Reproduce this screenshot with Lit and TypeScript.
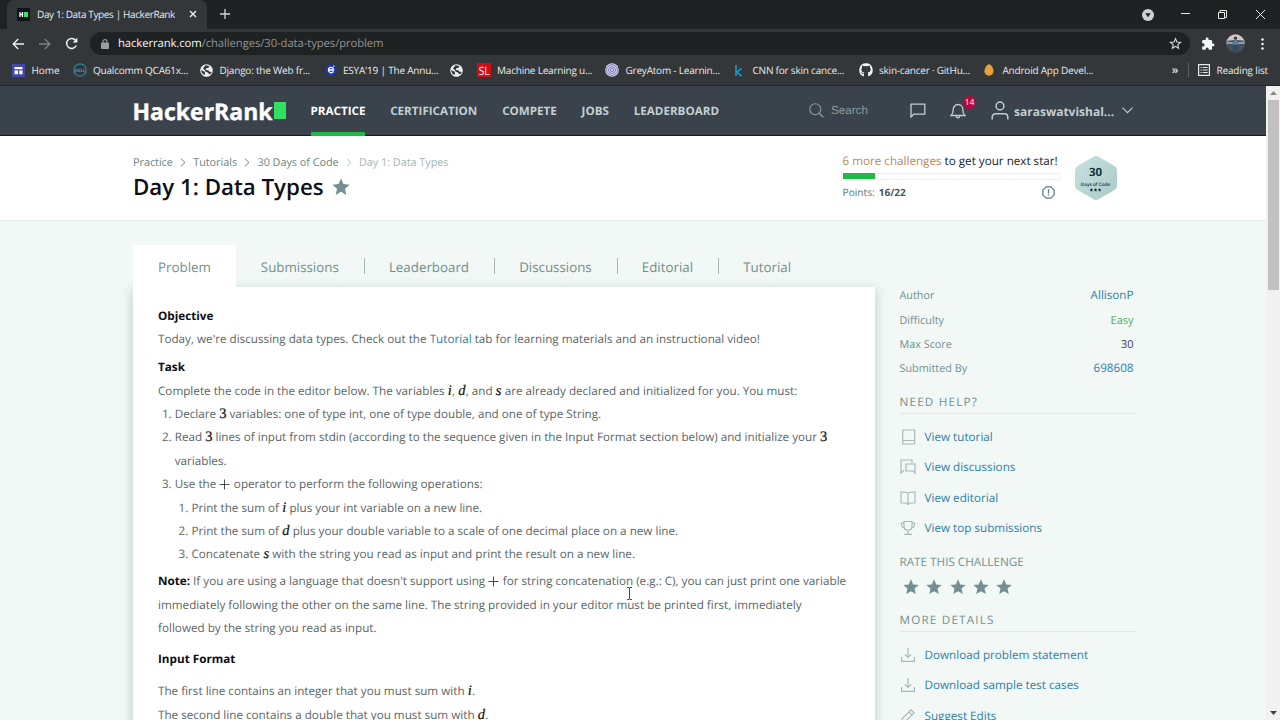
import { LitElement, html, css, svg } from "lit";
import { customElement } from "lit/decorators.js";

const STAR = "M12 .5l3.300 7.600 8.200.8-6.200 5.400 1.800 8.200L12 18.200l-7.100 4.300 1.800-8.200L.5 8.900l8.200-.8z";

const ico = (w: number, h: number, vb: string, body: unknown, cls = "") =>
  html`<svg class="ico ${cls}" width=${w} height=${h} viewBox=${vb}>${body}</svg>`;

const globe = ico(13, 13, "0 0 13 13", svg`<circle cx="6.500" cy="6.500" r="6.300" fill="#eceded"/>
  <path d="M1.200 6.200l2.600 1 1.200 1.300-.3 2.600C2.500 10.300 1.200 8.500 1.200 6.200zM5.500 1.300l3.800.7-.8 1.800-2.200.5-.6 1.600 2.600.3 1.200 1.500 2.200.2-1.200 2-1.500.3-1-1.800-2.300-.6-1-1.800L3 4.400z" fill="#34383b"/>`);

const bookmarks = [
  { w: 60.500, cls: "b1", label: "Home", icon: ico(13, 13, "0 0 13 13", svg`<rect width="13" height="13" fill="#4348a8"/><path d="M2.500 3h8v2.300h-8zM2.500 6.500h3.600v3.700H2.500zM7.300 6.500h3.200v3.700H7.300z" fill="#fff"/>`) },
  { w: 127.500, cls: "b2", label: "Qualcomm QCA61x...", icon: ico(14, 14, "0 0 14 14", svg`<circle cx="7" cy="7" r="6.200" fill="none" stroke="#3485a4" stroke-width="1.200"/><text x="7" y="8.800" font-size="4.600" font-weight="700" text-anchor="middle" fill="#3d9abf" font-family="Open Sans, sans-serif">DELL</text>`) },
  { w: 124.500, cls: "b3", label: "Django: the Web fr...", icon: globe },
  { w: 125.500, cls: "b4", label: "ESYA'19 | The Annu...", icon: ico(12, 12, "0 0 12 12", svg`<circle cx="6" cy="6" r="5.800" fill="#1b36b8"/><path d="M3.800 6h4.700c0-3.600-5-3.300-5 .2 0 3 3.600 3.300 5 1.200M8.500 2.500l.8-.8" fill="none" stroke="#fff" stroke-width="1.300"/>`) },
  { w: 26.500, cls: "b5", label: "", icon: globe },
  { w: 128.500, cls: "b6", label: "Machine Learning u...", icon: ico(14, 14, "0 0 14 14", svg`<rect width="14" height="14" fill="#d30d14"/><text x="7" y="11.500" font-size="11.500" textLength="10.500" lengthAdjust="spacingAndGlyphs" text-anchor="middle" fill="#fff" font-family="Open Sans, sans-serif">SL</text>`) },
  { w: 128, cls: "b7", label: "GreyAtom - Learnin...", icon: ico(14, 14, "0 0 14 14", svg`<circle cx="7" cy="7" r="6.800" fill="#d9d9f0"/><g fill="none" stroke="#5450a8" stroke-width=".7"><circle cx="7" cy="7" r="5.400"/><circle cx="7" cy="7" r="3.500"/><circle cx="7" cy="7" r="1.600"/></g>`) },
  { w: 125.500, cls: "b8", label: "CNN for skin cance...", icon: ico(13, 13, "0 0 13 13", svg`<path d="M3 1v11M8.500 4.500L3.700 8.300 8.800 12" fill="none" stroke="#1f93bd" stroke-width="1.700"/>`) },
  { w: 125.500, cls: "b9", label: "skin-cancer · GitHu...", icon: ico(14, 14, "0 0 16 16", svg`<path fill="#f4f4f4" d="M8 .3a7.700 7.700 0 00-2.400 15v-2.700c-1.700.3-2.300-.5-2.600-1.200-.2-.5-.6-.9-1-1.100.9-.2 1.400.4 1.900 1 .5.800 1.100.8 1.800.6.1-.5.300-.8.500-1-1.900-.2-3.500-1-3.500-3.800 0-.9.3-1.600.8-2.100-.1-.5-.2-1.200.1-2.100.8 0 1.600.4 2.300.9a8 8 0 014.200 0c.7-.5 1.500-.9 2.300-.9.3.9.2 1.600.1 2.100.5.500.8 1.200.8 2.100 0 2.800-1.700 3.600-3.500 3.800.3.300.6.800.6 1.500v2.900A7.700 7.700 0 008 .3z"/>`) },
  { w: 120, cls: "b10", label: "Android App Devel...", icon: ico(12, 12, "0 0 12 12", svg`<path d="M5 .3c2.300 0 4.500 4.200 4.500 7 0 2.700-1.900 4.400-4.500 4.400S.5 10 .5 7.300C.5 4.500 2.700.3 5 .3z" fill="#e9a13b"/>`) },
];

@customElement("browser-chrome")
class BrowserChrome extends LitElement {
  static styles = css`
    :host { display: block; height: 86px; font-family: "Open Sans", sans-serif; font-size: 10px; color: #e9eaeb; background: #33373a; text-rendering: geometricPrecision; }
    .ico { display: block; flex: none; }
    .strip { display: flex; height: 28.500px; background: #1f2223; align-items: center; box-sizing: border-box; }
    .tab { display: flex; align-items: center; width: 200px; height: 28.500px; margin-left: 7px; padding: 0 10px; box-sizing: border-box; background: #33373a; border-radius: 7px 7px 0 0; }
    .title { margin-left: 7px; flex: 1; white-space: nowrap; letter-spacing: -0.380px; }
    .plus { margin-left: 13px; }
    .win { margin-left: auto; display: flex; align-items: center; padding-right: 15px; }
    .win .w1 { margin: 1px 26.500px 0 0; }
    .win .w2 { margin-right: 28px; }
    .win .w3 { margin-right: 29.500px; }
    .bar { display: flex; align-items: center; height: 30.500px; padding: 0 16.500px 0 12px; }
    .bar .fwd { margin-left: 15px; }
    .bar .rel { margin: 0 12px 0 14px; }
    .omni { flex: 1; display: flex; align-items: center; height: 23px; border-radius: 12px; background: #1f2223; padding: 0 8.500px 0 11px; font-size: 11.300px; letter-spacing: -0.090px; }
    .url { flex: 1; margin-left: 9px; color: #8f9294; }
    .host { color: #f5f5f5; }
    .puz { margin: 0 10.500px 0 11px; }
    .dots { margin-left: 16px; }
    .marks { display: flex; align-items: center; height: 22px; padding: 0 12px; }
    .mark { display: flex; align-items: center; flex: none; white-space: nowrap; gap: 6.500px; box-sizing: border-box; letter-spacing: -0.210px; }
    .b1 { letter-spacing: -0.050px; }
    .rest { margin-left: auto; display: flex; align-items: center; white-space: nowrap; }
    .more { font-size: 12px; margin-right: 9px; font-weight: 600; padding-bottom: 2px; }
    .sep { width: 1px; height: 14px; background: #5c6063; margin-right: 9px; }
    .rest .txt { margin-left: 7px; letter-spacing: -0.170px; }
    .edge { margin-top: 4px; height: 1px; background: #24272a; }
  `;
  render() {
    return html`
      <div class="strip">
        <div class="tab">
          ${ico(13, 13, "0 0 13 13", svg`<rect width="13" height="13" fill="#0d141a"/><path d="M3 4v5M5.500 4v5M3 6.500h2.500" stroke="#fff" stroke-width="1.300"/><rect x="7" y="4" width="4" height="5" fill="#2ee66b"/>`)}
          <span class="title">Day 1: Data Types | HackerRank</span>
          ${ico(8, 8, "0 0 8 8", svg`<path d="M1 1l6 6M7 1L1 7" stroke="#f0f0f0" stroke-width="1.400"/>`)}
        </div>
        ${ico(10, 10, "0 0 10 10", svg`<path d="M5 0v10M0 5h10" stroke="#d5d6d7" stroke-width="1.300"/>`, "plus")}
        <div class="win">
          ${ico(12, 12, "0 0 12 12", svg`<circle cx="6" cy="6" r="6" fill="#d0d1d2"/><path d="M3.200 4.300h5.600L6 8.200z" fill="#1f2223"/>`, "w1")}
          ${ico(9, 9, "0 0 9 9", svg`<path d="M0 3.500h9" stroke="#e8e8e8" stroke-width="1"/>`, "w2")}
          ${ico(9, 9, "0 0 9 9", svg`<path d="M.5 2.500h6v6h-6zM2 2.500V.500h6.500v7H7" fill="none" stroke="#e8e8e8" stroke-width="1"/>`, "w3")}
          ${ico(9, 9, "0 0 9 9", svg`<path d="M0 0l9 9M9 0L0 9" stroke="#e8e8e8" stroke-width="1"/>`)}
        </div>
      </div>
      <div class="bar">
        ${ico(12, 12, "0 0 12 12", svg`<path d="M12 6H1.500M6.200 1L1.200 6l5 5" fill="none" stroke="#f0f0f0" stroke-width="1.400"/>`)}
        ${ico(12, 12, "0 0 12 12", svg`<path d="M0 6h10.500M5.800 1l5 5-5 5" fill="none" stroke="#7d8183" stroke-width="1.300"/>`, "fwd")}
        ${ico(13, 13, "0 0 13 13", svg`<path d="M11.200 8.500A5 5 0 1 1 10.600 3.300L12 4.800" fill="none" stroke="#f0f0f0" stroke-width="1.500"/><path d="M12.300.8v4.600H7.700z" fill="#f0f0f0"/>`, "rel")}
        <div class="omni">
          ${ico(8, 10, "0 0 8 10", svg`<rect y="3.500" width="8" height="6.500" rx=".8" fill="#9a9d9f"/><path d="M2 4V2.600a2 2 0 014 0V4" fill="none" stroke="#9a9d9f" stroke-width="1.100"/>`)}
          <span class="url"><span class="host">hackerrank.com</span>/challenges/30-data-types/problem</span>
          ${ico(13, 13, "0 0 24 24", svg`<path d="M12 3l2.600 6.200 6.700.6-5.100 4.400 1.500 6.600-5.700-3.500-5.700 3.500 1.500-6.600-5.100-4.400 6.700-.6z" fill="none" stroke="#dcdddd" stroke-width="2"/>`)}
        </div>
        ${ico(14, 14, "0 0 24 24", svg`<path d="M20.500 11H19V7c0-1.100-.9-2-2-2h-4V3.500a2.500 2.500 0 00-5 0V5H4a2 2 0 00-2 2v3.800h1.500a2.700 2.700 0 010 5.400H2V20c0 1.100.9 2 2 2h3.800v-1.500a2.700 2.700 0 015.400 0V22H17c1.100 0 2-.9 2-2v-4h1.500a2.500 2.500 0 000-5z" fill="#f5f5f5"/>`, "puz")}
        ${ico(19, 19, "0 0 19 19", svg`<defs><clipPath id="av"><circle cx="9.500" cy="9.500" r="9.300"/></clipPath></defs><g clip-path="url(#av)"><rect width="19" height="8" fill="#d3c5c2"/><rect y="7" width="19" height="4" fill="#8d9eb0"/><rect y="10" width="19" height="9" fill="#48505c"/><path d="M1.500 6.700l6-.4h4l6 .2v1l-5.300.5-.7 3.500 1 6.500H10.300L9.500 13l-.8 5H6.500l1-6.500-.7-3.500-5.300-.3z" fill="#30475f"/><circle cx="9.500" cy="4.200" r="1.600" fill="#3c3436"/><path d="M7.500 6.700h4v4h-4z" fill="#5687ad"/></g>`)}
        ${ico(3, 12, "0 0 3 12", svg`<g fill="#eee"><circle cx="1.500" cy="1.500" r="1.300"/><circle cx="1.500" cy="6" r="1.300"/><circle cx="1.500" cy="10.500" r="1.300"/></g>`, "dots")}
      </div>
      <div class="marks">
        ${bookmarks.map((b) => html`<div class="mark ${b.cls}" style="width:${b.w}px">${b.icon}${b.label}</div>`)}
        <div class="rest">
          <span class="more">»</span><span class="sep"></span>
          ${ico(12, 12, "0 0 12 12", svg`<rect x=".6" y=".6" width="10.800" height="10.800" fill="none" stroke="#e9eaeb" stroke-width="1.200"/><path d="M2.500 3.500h1.200M2.500 6h1.200M2.500 8.500h1.200M4.700 3.500h5M4.700 6h5M4.700 8.500h5" stroke="#e9eaeb"/>`)}
          <span class="txt">Reading list</span>
        </div>
      </div>
      <div class="edge"></div>`;
  }
}

@customElement("site-header")
class SiteHeader extends LitElement {
  static styles = css`
    :host { display: block; font-family: "Open Sans", sans-serif; text-rendering: geometricPrecision; }
    .ico { display: block; flex: none; }
    .nav { display: flex; height: 49px; border-bottom: 1px solid #161d25; background: #3a424c; align-items: center; padding-left: 133px; white-space: nowrap; }
    .logo { display: flex; align-items: center; width: 178px; color: #fff; font-weight: 700; font-size: 23px; margin-left: -0.500px; -webkit-text-stroke: 0.400px #fff; }
    .block { width: 12px; height: 17px; background: #32e05f; margin-left: 1px; }
    .links { display: flex; align-self: stretch; gap: 24.800px; font-size: 11.640px; font-weight: 700; color: #c2cfd1; }
    .link { display: flex; align-items: center; border-bottom: 4px solid transparent; padding-top: 5px; height: 41px; }
    .on { color: #fff; border-color: #1fba45; }
    .search { display: flex; align-items: center; margin-left: 90px; color: #8a9ba1; gap: 7px; font: 11.670px "Liberation Sans", sans-serif; width: 101px; }
    .bellbox { position: relative; margin-left: 24px; }
    .badge { position: absolute; left: 13px; top: -7px; width: 13px; height: 13px; border-radius: 7px; background: #b5083b; color: #fff; font-size: 8.500px; line-height: 13px; text-align: center; }
    .user { display: flex; align-items: center; margin-left: 25px; gap: 5px; font-size: 12px; font-weight: 700; color: #c2cfd1; }
    .user span { padding-top: 1px; }
    .caret { margin-left: 3px; }
    .head { display: flex; height: 84px; border-bottom: 1px solid #e3ebea; background: #fff; padding-left: 133px; box-sizing: content-box; }
    .left { width: 709.500px; padding-top: 17px; }
    .crumbs { display: flex; align-items: center; height: 18px; font-size: 10.830px; color: #6b8583; white-space: nowrap; letter-spacing: -0.020px; }
    .crumbs .ico { margin: 0 7.200px; }
    .last { color: #a3b5b4; }
    .title { display: flex; align-items: center; margin-top: 0.500px; height: 30px; font-size: 22.300px; font-weight: 600; color: #0b1016; white-space: nowrap; gap: 8px; }
    .prog { width: 217.500px; padding-top: 16px; white-space: nowrap; }
    .msg { font-size: 11.670px; line-height: 20px; color: #0e2230; }
    .hot { color: #b98659; }
    .track { height: 5px; border: 1px solid #eef1f1; border-left: 0; margin-top: 1px; }
    .fill { height: 6px; width: 32px; background: #1fba45; margin-top: -1px; }
    .pts { display: flex; align-items: center; height: 18px; margin-top: 3px; font-size: 10.200px; color: #5f7375; }
    .pts b { font-weight: 700; color: #4a535c; margin-left: 4px; flex: 1; font-size: 10px; }
    .pts .ico { margin-right: 5px; }
    .hex { margin: 18.500px 0 0 14px; }
  `;
  render() {
    const chev = (c: string) => ico(6, 9, "0 0 6 9", svg`<path d="M.8.6L5 4.500.8 8.400" fill="none" stroke=${c}/>`);
    return html`
      <div class="nav">
        <div class="logo"><span>HackerRank</span><span class="block"></span></div>
        <div class="links">
          <div class="link on">PRACTICE</div><div class="link">CERTIFICATION</div><div class="link">COMPETE</div><div class="link">JOBS</div><div class="link">LEADERBOARD</div>
        </div>
        <div class="search">${ico(15, 15, "0 0 15 15", svg`<circle cx="6.300" cy="6.300" r="5.500" fill="none" stroke="#8a9ba1" stroke-width="1.100"/><path d="M10.300 10.300l4 4" stroke="#8a9ba1" stroke-width="1.300"/>`)}<span>Search</span></div>
        ${ico(16, 15, "0 0 16 15", svg`<path d="M1 14V1.200h13.800v10H3.800z" fill="none" stroke="#c2cfd1" stroke-width="1.300"/>`)}
        <div class="bellbox">
          ${ico(16, 16, "0 0 16 16", svg`<path d="M1 12.500c1.800-1.500 2.200-3 2.200-6C3.200 3.700 5.200 1.500 8 1.500s4.800 2.200 4.800 5c0 3 .4 4.500 2.200 6zM6.300 13c0 2.500 3.400 2.500 3.400 0" fill="none" stroke="#c2cfd1" stroke-width="1.300"/>`)}
          <span class="badge">14</span>
        </div>
        <div class="user">
          ${ico(18, 19, "0 0 18 19", svg`<circle cx="9" cy="5" r="3.900" fill="none" stroke="#c2cfd1" stroke-width="1.500"/><path d="M1.200 18.500v-2.200c0-2.200 1.300-3.600 3.500-3.600h8.600c2.200 0 3.500 1.400 3.500 3.600v2.200" fill="none" stroke="#c2cfd1" stroke-width="1.500"/>`)}
          <span>saraswatvishal...</span>
          ${ico(11, 7, "0 0 11 7", svg`<path d="M.5.700l5 5 5-5" fill="none" stroke="#c2cfd1" stroke-width="1.100"/>`, "caret")}
        </div>
      </div>
      <div class="head">
        <div class="left">
          <div class="crumbs">Practice${chev("#6b8583")}Tutorials${chev("#6b8583")}30 Days of Code${chev("#b7c4c3")}<span class="last">Day 1: Data Types</span></div>
          <div class="title">Day 1: Data Types ${ico(18, 18, "0 0 24 24", svg`<path d=${STAR} fill="#738f93"/>`)}</div>
        </div>
        <div class="prog">
          <div class="msg"><span class="hot">6 more challenges</span> to get your next star!</div>
          <div class="track"><div class="fill"></div></div>
          <div class="pts">Points: <b>16/22</b>${ico(13, 13, "0 0 13 13", svg`<path d="M4.200.8h4.600l3.400 3.400v4.600l-3.400 3.400H4.200L.8 8.800V4.200z" fill="none" stroke="#587b7b" stroke-width="1.200"/><path d="M6.500 3.200v4.200M6.500 8.500v1.300" stroke="#587b7b" stroke-width="1.300"/>`)}</div>
        </div>
        ${ico(44, 46, "0 0 44 46", svg`<defs><linearGradient id="hx" x1="0" y1="0" x2="1" y2="1"><stop offset="0" stop-color="#c6e2e0"/><stop offset="1" stop-color="#a9cac8"/></linearGradient></defs>
          <path d="M19.500 1.800q2.500-1.400 5 0L40.500 11q2.500 1.500 2.500 4.200v15.600q0 2.700-2.500 4.200l-16 9.200q-2.500 1.400-5 0L3.500 35Q1 33.500 1 30.800V15.200Q1 12.500 3.500 11z" fill="url(#hx)"/>
          <g text-anchor="middle" fill="#16303c" font-weight="600" font-family="Open Sans, sans-serif"><text x="21.500" y="20.500" font-size="11.500" font-weight="700">30</text><text x="21.500" y="31" font-size="4.700">Days of Code</text></g>
          <g fill="#16303c"><path d=${STAR} transform="translate(15.500 33) scale(.16)"/><path d=${STAR} transform="translate(19.600 33) scale(.16)"/><path d=${STAR} transform="translate(23.700 33) scale(.16)"/></g>`, "hex")}
      </div>`;
  }
}

const m = (s: string) => html`<i class="m">${s}</i>`;
const n = (s: string) => html`<span class="n">${s}</span>`;
const plus = html`<svg class="pl" width="11.500" height="11" viewBox="0 0 11.500 11"><path d="M5.500.500v10M.500 5.500h10" stroke="#222" stroke-width=".8"/></svg>`;

@customElement("problem-panel")
class ProblemPanel extends LitElement {
  static styles = css`
    :host { display: block; width: 742px; font-family: "Open Sans", sans-serif; text-rendering: geometricPrecision; }
    .tabs { display: flex; height: 42px; font-size: 13.330px; color: #738f8d; }
    .tab { display: flex; align-items: center; padding: 2px 25px 0; box-sizing: border-box; height: 42px; }
    .on { background: #fff; position: relative; z-index: 1; }
    .bar { width: 1px; height: 16px; background: #a5b8b6; align-self: center; margin-right: -0.900px; }
    .card { background: #fff; box-shadow: 0 3px 11px rgba(60, 85, 85, 0.300); padding: 17.600px 25px 0; height: 500px; box-sizing: border-box; font-size: 11.690px; line-height: 23.400px; color: #5a6569; white-space: nowrap; }
    h3, b { font-size: 11.690px; font-weight: 700; color: #0b0f14; margin: 0; }
    p, ol { margin: 0; }
    ol { padding-left: 16.700px; }
    .task { margin-top: 4.700px; }
    .note { margin-top: 3.500px; }
    .fmt { margin: 8px 0 8.500px; }
    a { color: #2f7ea8; }
    .m, .n { font-family: "Liberation Serif", serif; font-size: 14.500px; color: #111; line-height: 1; -webkit-text-stroke: 0.200px #111; }
    .m { padding: 0 0.200px; }
    .pl { vertical-align: -2px; }
  `;
  render() {
    const tabs = ["Problem", "Submissions", "Leaderboard", "Discussions", "Editorial", "Tutorial"];
    return html`
      <div class="tabs">${tabs.map((t, i) => html`${i > 1 ? html`<span class="bar"></span>` : ""}<div class="tab ${i ? "" : "on"}">${t}</div>`)}</div>
      <div class="card">
        <h3>Objective</h3>
        <p>Today, we're discussing data types. Check out the <a>Tutorial</a> tab for learning materials and an instructional video!</p>
        <h3 class="task">Task</h3>
        <p>Complete the code in the editor below. The variables ${m("i")}, ${m("d")}, and ${m("s")} are already declared and initialized for you. You must:</p>
        <ol>
          <li>Declare ${n("3")} variables: one of type int, one of type double, and one of type String.</li>
          <li>Read ${n("3")} lines of input from stdin (according to the sequence given in the Input Format section below) and initialize your ${n("3")}<br>variables.</li>
          <li>Use the ${plus} operator to perform the following operations:
            <ol>
              <li>Print the sum of ${m("i")} plus your int variable on a new line.</li>
              <li>Print the sum of ${m("d")} plus your double variable to a scale of one decimal place on a new line.</li>
              <li>Concatenate ${m("s")} with the string you read as input and print the result on a new line.</li>
            </ol>
          </li>
        </ol>
        <p class="note"><b>Note:</b> If you are using a language that doesn't support using ${plus} for string concatenation (e.g.: C), you can just print one variable<br>immediately following the other on the same line. The string provided in your editor must be printed first, immediately<br>followed by the string you read as input.</p>
        <h3 class="fmt">Input Format</h3>
        <p>The first line contains an integer that you must sum with ${m("i")}.<br>The second line contains a double that you must sum with ${m("d")}.</p>
      </div>`;
  }
}

const line = (d: string) => ico(16, 16, "0 0 16 16", svg`<path d=${d} fill="none" stroke="#a9bab9" stroke-width="1.200"/>`);
const DOWN = "M8 1v9.500M4.800 7.300L8 10.500l3.200-3.200M1.600 10v4.400h12.800V10";

@customElement("side-info")
class SideInfo extends LitElement {
  static styles = css`
    :host { display: block; width: 237px; padding-top: 38.600px; font-family: "Open Sans", sans-serif; font-size: 11.700px; color: #738f8d; white-space: nowrap; text-rendering: geometricPrecision; }
    .ico { display: block; flex: none; }
    .row { display: flex; justify-content: space-between; align-items: center; height: 24.400px; width: 234px; font-size: 10.830px; }
    .row span + span { font-size: 11.670px; }
    .blue { color: #2f7ea8; }
    .row .green { color: #4cae5b; font-size: 11px; }
    .row .dark { color: #39424e; font-size: 11px; }
    .cap { display: flex; align-items: center; height: 22px; padding-top: 1px; border-bottom: 1px solid #dfe9e8; letter-spacing: 1.180px; margin-bottom: 7.300px; }
    .help { margin-top: 9px; }
    .item { display: flex; align-items: center; height: 30.500px; gap: 9px; color: #2f7ea8; }
    .rate { margin-top: 10.300px; line-height: 17px; }
    .stars { display: flex; gap: 7.300px; padding: 8.300px 0 0 3.500px; }
    .det { margin-top: 13px; }
  `;
  render() {
    return html`
      <div class="row"><span>Author</span><span class="blue">AllisonP</span></div>
      <div class="row"><span>Difficulty</span><span class="green">Easy</span></div>
      <div class="row"><span>Max Score</span><span class="dark">30</span></div>
      <div class="row"><span>Submitted By</span><span class="blue">698608</span></div>
      <div class="cap help">NEED HELP?</div>
      <div class="item">${line("M2.700 1h12v14h-12zM2.700 11.500h12")}View tutorial</div>
      <div class="item">${line("M4 11.500l-3 2.500V1h11v3.300M6 5h9v9l-2-2H6z")}View discussions</div>
      <div class="item">${line("M8 3.200C7 2 5 2 1 2v11h5l2 1.500L10 13h5V2c-4 0-6 0-7 1.200zM8 3.200V14")}View editorial</div>
      <div class="item">${line("M4 1.500h8v5c0 5-8 5-8 0zM4 3H1.300c0 3 .7 4.500 3 5M12 3h2.700c0 3-.7 4.500-3 5M8 10.500v3.500M4 14.300h8")}View top submissions</div>
      <div class="rate">RATE THIS CHALLENGE</div>
      <div class="stars">${[1, 2, 3, 4, 5].map(() => ico(16, 16, "0 0 24 24", svg`<path d=${STAR} fill="#738f93"/>`))}</div>
      <div class="cap det">MORE DETAILS</div>
      <div class="item">${line(DOWN)}Download problem statement</div>
      <div class="item">${line(DOWN)}Download sample test cases</div>
      <div class="item">${line("M1.500 14.500l.8-4L11 1.800l3 3-8.700 8.700zM9 3.800l3 3")}Suggest Edits</div>`;
  }
}

@customElement("app-root")
class AppRoot extends LitElement {
  static styles = css`
    :host { display: block; position: relative; width: 1280px; height: 720px; overflow: hidden; background: #f1f8f6; }
    .view { display: flex; height: 634px; }
    .page { flex: 1; overflow: hidden; }
    .body { display: flex; gap: 24.500px; padding: 24px 0 0 133px; height: 499px; box-sizing: border-box; }
    .scroll { width: 14px; background: #f1f1f1; display: flex; flex-direction: column; align-items: center; }
    .up, .down { height: 14px; display: flex; align-items: center; }
    .thumb { width: 11px; height: 190px; background: #c1c1c1; }
    .down { margin-top: auto; }
    .cursor { position: absolute; left: 626px; top: 587px; }
  `;
  render() {
    return html`
      <browser-chrome></browser-chrome>
      <div class="view">
        <div class="page">
          <site-header></site-header>
          <div class="body"><problem-panel></problem-panel><side-info></side-info></div>
        </div>
        <div class="scroll">
          <div class="up">${ico(7, 4, "0 0 7 4", svg`<path d="M0 4L3.500 0 7 4z" fill="#8b8b8b"/>`)}</div>
          <div class="thumb"></div>
          <div class="down">${ico(7, 4, "0 0 7 4", svg`<path d="M0 0h7L3.500 4z" fill="#404040"/>`)}</div>
        </div>
      </div>
      <svg class="cursor" width="7" height="13" viewBox="0 0 7 13"><path d="M1 .500h2l.5.500.5-.500h2M3.500 1v11M1 12.500h2l.5-.500.5.500h2" fill="none" stroke="#333" stroke-width=".9"/></svg>`;
  }
}
